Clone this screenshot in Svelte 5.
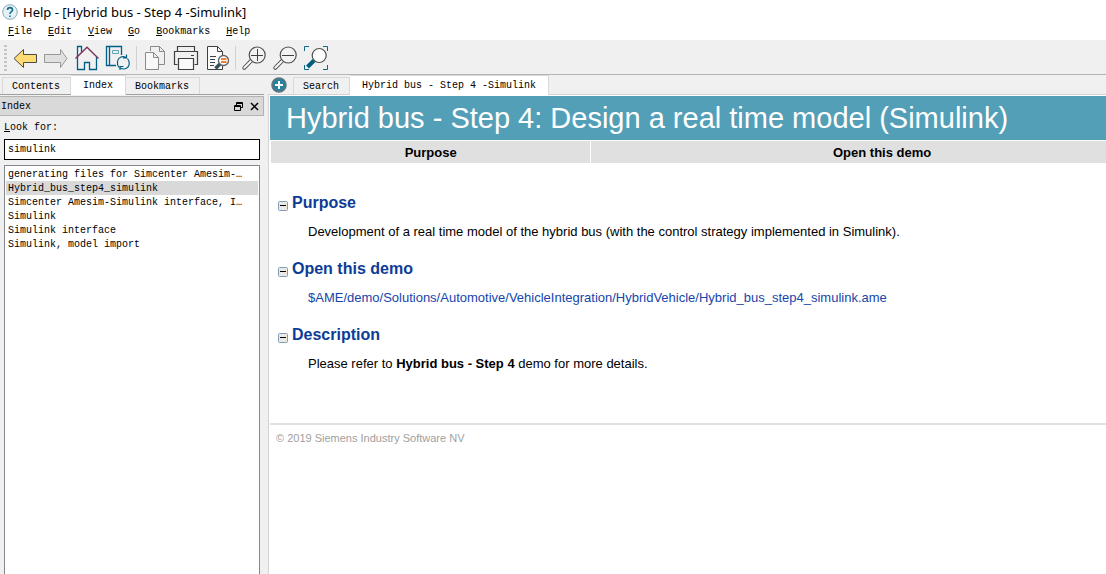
<script lang="ts">
  const menus = ['File', 'Edit', 'View', 'Go', 'Bookmarks', 'Help'];
  const sideTabs = ['Contents', 'Index', 'Bookmarks'];
  const entries = [
    'generating files for Simcenter Amesim-…',
    'Hybrid_bus_step4_simulink',
    'Simcenter Amesim-Simulink interface, I…',
    'Simulink',
    'Simulink interface',
    'Simulink, model import'
  ];
  const toolGroups = [
    ['Back', 'Forward', 'Home', 'Sync with Contents'],
    ['Copy', 'Print', 'Print Preview'],
    ['Zoom in', 'Zoom out', 'Normal Size']
  ];

  let activeSide = $state('Index');
  let activePage = $state('demo');
  let query = $state('simulink');
  let selected = $state(1);
  let closed: Record<string, boolean> = $state({});
</script>

{#snippet icon(name: string)}
  <svg width="24" height="24" viewBox="0 0 24 24" fill="none" stroke="#404040">
    {#if name === 'Back'}
      <path d="M1 12.5 10.5 3.5V8.5H23.5V16.5H10.5V21.5Z" fill="#ffdc73" stroke="#4a4a4a" />
    {:else if name === 'Forward'}
      <path d="M23 12.5 16.5 3.5V8.5H.5V16.5H16.5V21.5Z" fill="#e0e0e0" stroke="#999" />
    {:else if name === 'Home'}
      <path d="M2.5 11V.5H6.5V6M2.5 11V23.5H9.5V16.5H14.5V23.5H21.5V11" stroke="#005f87" stroke-width="1.3" />
      <path d="M.5 12.5 12 1.3 23.5 12.5" stroke="#7d3560" stroke-width="1.4" />
    {:else if name === 'Sync with Contents'}
      <path d="M10 19.5H.5V.5H15.5V9M3.5 .5V19.5" stroke="#005f87" stroke-width="1.3" />
      <path d="M6.5 4.5H12.5V7.5H6.5Z" stroke="#5fa5bd" />
      <path d="M13 21.5C10.5 18 10.8 13 14.5 11.2 16.5 10.3 18.5 10.6 20 11.5M20.5 8.5V12H17M21.5 12.5C24.3 16 23.8 20.5 20.5 22.3 18.5 23.3 16.5 23.2 14.5 22M14 24V20.5H17.5" stroke="#005f87" stroke-width="1.2" />
    {:else if name === 'Copy'}
      <path d="M7.5 5V.5H16.5L21.5 5.5V18.5H16M16.5 .5V5.5H21.5" stroke="#8a8a8a" />
      <path d="M2.5 6.5H10.5L15.5 11.5V23.5H2.5ZM10.5 6.5V11.5H15.5" fill="#f8f8f8" stroke="#8a8a8a" />
    {:else if name === 'Print'}
      <path d="M3.5 5.5V.5H20.5V5.5M3.5 18.5H.5V5.5H23.5V18.5H20.5" stroke-width="1.2" />
      <path d="M4.5 12.5H19.5V23.5H4.5Z" fill="#fafafa" stroke-width="1.2" />
      <path d="M17 9.5H20" />
    {:else if name === 'Print Preview'}
      <path d="M2.5 .5H12.5L17.5 5.5V23.5H2.5Z" fill="#fafafa" />
      <path d="M12.5 .5V5.5H17.5M5 10.5H11M5 13.5H10M5 16.5H10M5 19.5H9" />
      <path d="M15 18 10.5 22.5" stroke="#34505c" stroke-width="3.5" />
      <circle cx="18.5" cy="14.5" r="5" fill="#fff" stroke="#606060" stroke-width="1.3" />
      <path d="M16 13H21.5M16 16H21.5" stroke="#f08030" stroke-width="2" />
    {:else}
      {#if name === 'Normal Size'}
        <path d="M.5 5V.5H5M19 .5H23.5V5M23.5 19V23.5H19M5 23.5H.5V19" stroke="#0d6685" />
        <path d="M10 14.5 3.5 21" stroke="#005f7d" stroke-width="4" />
      {:else}
        <path d="M9.3 14.7 2.3 21.8" stroke="#505050" stroke-width="4" stroke-linecap="round" />
        <path d="M9.3 14.7 2.3 21.8" stroke="#f8f8f8" stroke-width="2" stroke-linecap="round" />
      {/if}
      <circle
        cx="15.2"
        cy={name === 'Normal Size' ? 9.5 : 9}
        r={name === 'Normal Size' ? 7 : 8}
        fill={name === 'Normal Size' ? '#fff' : '#f2f2f2'}
        stroke="#505050"
        stroke-width="1.2"
      />
      {#if name !== 'Normal Size'}
        <path d="M9 9.5H21" />
      {/if}
      {#if name === 'Zoom in'}
        <path d="M15.5 3V15" />
      {/if}
    {/if}
  </svg>
{/snippet}

{#snippet section(title: string, body: any)}
  <section>
    <div class="heading">
      <button class="fold" aria-label="Toggle {title}" onclick={() => (closed[title] = !closed[title])}>
        <svg width="10" height="10" viewBox="0 0 10 10">
          <rect x=".5" y=".5" width="9" height="9" rx="1" fill="#ece9e2" stroke="#7f9db9" />
          <rect x="2" y="4" width="6" height="1" fill="#000" />
          {#if closed[title]}
            <rect x="4" y="2" width="1" height="6" fill="#000" />
          {/if}
        </svg>
      </button>
      <h2>{title}</h2>
    </div>
    {#if !closed[title]}
      <p>{@render body()}</p>
    {/if}
  </section>
{/snippet}

{#snippet purpose()}Development of a real time model of the hybrid bus (with the control strategy implemented in Simulink).{/snippet}
{#snippet demo()}<a href="#demo">$AME/demo/Solutions/Automotive/VehicleIntegration/HybridVehicle/Hybrid_bus_step4_simulink.ame</a>{/snippet}
{#snippet description()}Please refer to <b>Hybrid bus - Step 4</b> demo for more details.{/snippet}

<div class="window">
  <header class="titlebar">
    <svg width="16" height="16" viewBox="0 0 16 16">
      <circle cx="8" cy="8" r="7.3" fill="#e3f1f8" stroke="#8fa9b5" />
      <path d="M5.5 6C5.5 2.8 10.5 2.8 10.5 6 10.5 7.8 8 7.7 8 10M8 11.4V13" fill="none" stroke="#1c6e8c" stroke-width="1.6" />
    </svg>
    <span>Help - [Hybrid bus - Step 4 -Simulink]</span>
  </header>

  <nav class="menubar">
    {#each menus as menu}
      <button><u>{menu[0]}</u>{menu.slice(1)}</button>
    {/each}
  </nav>

  <div class="toolbar">
    <span class="grip"></span>
    {#each toolGroups as group, i}
      {#if i > 0}
        <span class="separator"></span>
      {/if}
      <div class="group">
        {#each group as tool}
          <button aria-label={tool} title={tool}>{@render icon(tool)}</button>
        {/each}
      </div>
    {/each}
  </div>

  <div class="main">
    <aside>
      <div class="tabs">
        {#each sideTabs as tab}
          <button class="tab" class:active={activeSide === tab} onclick={() => (activeSide = tab)}>{tab}</button>
        {/each}
      </div>
      <div class="dock-title">
        <span>Index</span>
        <button aria-label="Float">
          <svg width="9" height="9" viewBox="0 0 9 9" fill="none" stroke="#000">
            <path d="M2.5 3V.5H8.5V5.5H6M2 1.5H9M.5 3.5H6.5V8.5H.5ZM0 4.5H7" />
          </svg>
        </button>
        <button aria-label="Close">
          <svg width="9" height="9" viewBox="0 0 9 9"><path d="M1 1 8 8M8 1 1 8" stroke="#000" stroke-width="1.5" /></svg>
        </button>
      </div>
      <div class="index">
        <label for="look-for"><u>L</u>ook for:</label>
        <input id="look-for" type="text" bind:value={query} />
        <ul>
          {#each entries as entry, i}
            <li><button class:selected={selected === i} onclick={() => (selected = i)}>{entry}</button></li>
          {/each}
        </ul>
      </div>
    </aside>

    <div class="viewer">
      <div class="tabs">
        <button class="add" aria-label="Add new page">
          <svg width="16" height="16" viewBox="0 0 16 16">
            <circle cx="8" cy="8" r="7" fill="#25839f" stroke="#66727a" stroke-width="1.6" />
            <path d="M8 4V12M4 8H12" stroke="#fff" stroke-width="2" />
          </svg>
        </button>
        <button class="tab" class:active={activePage === 'search'} onclick={() => (activePage = 'search')}>Search</button>
        <button class="tab" class:active={activePage === 'demo'} onclick={() => (activePage = 'demo')}>Hybrid bus - Step 4 -Simulink</button>
      </div>
      <article>
        <h1>Hybrid bus - Step 4: Design a real time model (Simulink)</h1>
        <div class="anchors">
          <a href="#purpose">Purpose</a>
          <a href="#demo">Open this demo</a>
        </div>
        <div class="sections">
          {@render section('Purpose', purpose)}
          {@render section('Open this demo', demo)}
          {@render section('Description', description)}
        </div>
        <footer>© 2019 Siemens Industry Software NV</footer>
      </article>
    </div>
  </div>
</div>

<style>
  .window {
    display: flex;
    flex-direction: column;
    min-height: 100vh;
    background: #f0f0f0;
    color: #000;
    font: 10px/14px "Liberation Mono", monospace;
  }

  button {
    padding: 0;
    border: none;
    background: none;
    color: inherit;
    font: inherit;
    white-space: nowrap;
  }

  svg {
    display: block;
    overflow: visible;
  }

  .titlebar {
    display: flex;
    align-items: center;
    gap: 5px;
    height: 23px;
    padding-left: 2px;
    background: #fff;
    font: 13px/18px "Noto Sans", sans-serif;
  }

  .menubar {
    display: flex;
    gap: 16px;
    height: 17px;
    padding-left: 8px;
    background: #fff;
  }

  .toolbar {
    display: flex;
    align-items: center;
    gap: 6px;
    height: 32px;
    padding: 2px 0 0 4px;
    border-bottom: 1px solid #b4b4b4;
  }

  .grip {
    width: 3px;
    height: 26px;
    background: repeating-linear-gradient(#c4c4c4 0 2px, transparent 2px 4px);
  }

  .separator {
    width: 1px;
    height: 24px;
    background: #d0d0d0;
  }

  .group {
    display: flex;
    gap: 7px;
  }

  .main {
    flex: 1;
    display: flex;
  }

  aside {
    display: flex;
    flex-direction: column;
    width: 264px;
    margin-right: 4px;
  }

  .tabs {
    display: flex;
    align-items: flex-end;
    height: 19px;
    border-bottom: 1px solid #a0a0a0;
  }

  aside .tabs {
    padding-left: 2px;
  }

  .tab {
    height: 17px;
    padding: 1px 10px 0 9px;
    border: 1px solid #d9d9d9;
    border-bottom: none;
  }

  .tab + .tab {
    border-left: none;
  }

  .tab.active {
    height: 20px;
    padding: 0 12px;
    margin-bottom: -1px;
    background: #fff;
  }

  .dock-title {
    display: flex;
    align-items: center;
    gap: 7px;
    height: 18px;
    margin-top: 1px;
    padding: 0 4px 0 1px;
    border: 1px solid #b4b4b4;
    border-left: none;
    background: #d9d9d9;
  }

  .dock-title span {
    flex: 1;
    padding-top: 1px;
  }

  .index {
    flex: 1;
    display: flex;
    flex-direction: column;
    padding: 5px 4px 0;
  }

  input {
    height: 21px;
    margin: 4px 0 5px;
    padding: 0 3px;
    box-sizing: border-box;
    border: 1px solid #000;
    border-radius: 0;
    outline: none;
    background: #fff;
    font: inherit;
  }

  ul {
    flex: 1;
    margin: 0;
    padding: 1px;
    border: 1px solid #828790;
    border-bottom: none;
    background: #fff;
    list-style: none;
  }

  li button {
    display: block;
    width: 100%;
    height: 14px;
    padding: 0 2px;
    line-height: 15px;
    text-align: left;
  }

  li button.selected {
    background: #d9d9d9;
  }

  .viewer {
    flex: 1;
    display: flex;
    flex-direction: column;
    min-width: 0;
  }

  .viewer .tabs {
    border-color: #d4d4d4;
  }

  .add {
    margin: 0 6px 1px 3px;
  }

  article {
    flex: 1;
    padding: 1px 0 0 1px;
    border-left: 1px solid #d4d4d4;
    background: #fff;
    font: 13px/16px "Liberation Sans", sans-serif;
    overflow: hidden;
  }

  h1 {
    margin: 0;
    padding-left: 16px;
    background: #549fb8;
    color: #fff;
    font-size: 29px;
    font-weight: 400;
    line-height: 44px;
    white-space: nowrap;
  }

  /* the anchor row is wider than the view and runs past its right edge */
  .anchors {
    display: grid;
    grid-template-columns: 319fr 581fr;
    gap: 1px;
    width: 108%;
    padding: 1px 0 0 1px;
    box-sizing: border-box;
  }

  .anchors a {
    padding-top: 1px;
    background: #e0e0e0;
    color: #000;
    font-weight: 700;
    line-height: 21px;
    text-align: center;
    text-decoration: none;
  }

  .sections {
    padding: 30px 8px 32px;
  }

  section {
    margin-bottom: 19px;
  }

  .heading {
    display: flex;
    align-items: center;
    gap: 4px;
  }

  h2 {
    margin: 0;
    color: #0c3c96;
    font-size: 16px;
    line-height: 20px;
  }

  .fold {
    padding-top: 6px;
  }

  p {
    margin: 11px 0 0 30px;
  }

  p a {
    color: #1646aa;
    text-decoration: none;
  }

  footer {
    padding: 5px 6px;
    border-top: 2px solid #e0e0e0;
    color: #a0a0a0;
    font-size: 11px;
  }
</style>
